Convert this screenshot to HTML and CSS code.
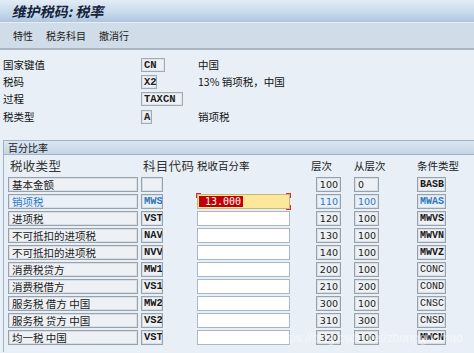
FILE: index.html
```html
<!DOCTYPE html>
<html lang="zh">
<head>
<meta charset="utf-8">
<link rel="stylesheet" href="styles.css">
</head>
<body>
<div class="titlebar"><span class="title">维护税码: 税率</span></div>
<div class="toolbar">
  <span>特性</span><span>税务科目</span><span>撤消行</span>
</div>
<div class="form">
  <div class="frow"><span class="flabel">国家键值</span><span class="fslot"><span class="fbox w24">CN</span></span><span class="ftext">中国</span></div>
  <div class="frow"><span class="flabel">税码</span><span class="fslot"><span class="fbox w16">X2</span></span><span class="ftext">13% 销项税，中国</span></div>
  <div class="frow"><span class="flabel">过程</span><span class="fslot"><span class="fbox w42">TAXCN</span></span><span class="ftext"></span></div>
  <div class="frow"><span class="flabel">税类型</span><span class="fslot"><span class="fbox w11">A</span></span><span class="ftext">销项税</span></div>
</div>
<div class="section">
  <div class="section-head">百分比率</div>
  <div class="table">
    <div class="th big">税收类型</div>
    <div class="th big">科目代码</div>
    <div class="th">税收百分率</div>
    <div class="th shift">层次</div>
    <div class="th">从层次</div>
    <div class="th">条件类型</div>

    <div class="cell"><span class="box name">基本金额</span></div>
    <div class="cell"><span class="box code"></span></div>
    <div class="cell"></div>
    <div class="cell"><span class="box lvl">100</span></div>
    <div class="cell"><span class="box from">0</span></div>
    <div class="cell"><span class="box cond">BASB</span></div>

    <div class="cell"><span class="box name hl">销项税</span></div>
    <div class="cell"><span class="box code hl">MWS</span></div>
    <div class="cell"><span class="pct active"><span class="sel">13.000</span><i class="c tl"></i><i class="c tr"></i><i class="c br"></i></span></div>
    <div class="cell"><span class="box lvl hl">110</span></div>
    <div class="cell"><span class="box from hl">100</span></div>
    <div class="cell"><span class="box cond hl">MWAS</span></div>

    <div class="cell"><span class="box name">进项税</span></div>
    <div class="cell"><span class="box code">VST</span></div>
    <div class="cell"><span class="pct"></span></div>
    <div class="cell"><span class="box lvl">120</span></div>
    <div class="cell"><span class="box from">100</span></div>
    <div class="cell"><span class="box cond">MWVS</span></div>

    <div class="cell"><span class="box name">不可抵扣的进项税</span></div>
    <div class="cell"><span class="box code">NAV</span></div>
    <div class="cell"><span class="pct"></span></div>
    <div class="cell"><span class="box lvl">130</span></div>
    <div class="cell"><span class="box from">100</span></div>
    <div class="cell"><span class="box cond">MWVN</span></div>

    <div class="cell"><span class="box name">不可抵扣的进项税</span></div>
    <div class="cell"><span class="box code">NVV</span></div>
    <div class="cell"><span class="pct"></span></div>
    <div class="cell"><span class="box lvl">140</span></div>
    <div class="cell"><span class="box from">100</span></div>
    <div class="cell"><span class="box cond">MWVZ</span></div>

    <div class="cell"><span class="box name">消费税贷方</span></div>
    <div class="cell"><span class="box code">MW1</span></div>
    <div class="cell"><span class="pct"></span></div>
    <div class="cell"><span class="box lvl">200</span></div>
    <div class="cell"><span class="box from">100</span></div>
    <div class="cell"><span class="box cond light">CONC</span></div>

    <div class="cell"><span class="box name">消费税借方</span></div>
    <div class="cell"><span class="box code">VS1</span></div>
    <div class="cell"><span class="pct"></span></div>
    <div class="cell"><span class="box lvl">210</span></div>
    <div class="cell"><span class="box from">200</span></div>
    <div class="cell"><span class="box cond light">COND</span></div>

    <div class="cell"><span class="box name">服务税 借方 中国</span></div>
    <div class="cell"><span class="box code">MW2</span></div>
    <div class="cell"><span class="pct"></span></div>
    <div class="cell"><span class="box lvl">300</span></div>
    <div class="cell"><span class="box from">100</span></div>
    <div class="cell"><span class="box cond light">CNSC</span></div>

    <div class="cell"><span class="box name">服务税 贷方 中国</span></div>
    <div class="cell"><span class="box code">VS2</span></div>
    <div class="cell"><span class="pct"></span></div>
    <div class="cell"><span class="box lvl">310</span></div>
    <div class="cell"><span class="box from">300</span></div>
    <div class="cell"><span class="box cond light">CNSD</span></div>

    <div class="cell"><span class="box name">均一税 中国</span></div>
    <div class="cell"><span class="box code">VST</span></div>
    <div class="cell"><span class="pct"></span></div>
    <div class="cell"><span class="box lvl">320</span></div>
    <div class="cell"><span class="box from">100</span></div>
    <div class="cell"><span class="box cond">MWCN</span></div>
  </div>
</div>
<div class="watermark">https://blog.csdn.net/zhongguomao</div>
</body>
</html>
```

FILE: styles.css
```css
html, body {
  margin: 0;
  padding: 0;
}
body {
  width: 474px;
  height: 353px;
  overflow: hidden;
  background: #e8eff6;
  font-family: "Noto Sans CJK SC", "Liberation Sans", sans-serif;
  color: #111;
  position: relative;
}
.titlebar {
  height: 22px;
  background: linear-gradient(#e2ecf6, #c6d8ea 60%, #adc6de);
  border-bottom: 1px solid #e6edf4;
  display: flex;
  align-items: center;
  padding-left: 13px;
}
.title {
  display: inline-block;
  font-size: 14px;
  font-weight: bold;
  color: #15243a;
  line-height: 1;
  transform: skewX(-12deg);
}
.toolbar {
  height: 25px;
  background: #d0dde8;
  border-bottom: 2px solid #aab7c3;
  display: flex;
  align-items: center;
  gap: 13px;
  padding-left: 13px;
  font-size: 10px;
  color: #1a1a1a;
}
.form {
  padding: 6px 0 0 3px;
  display: flex;
  flex-direction: column;
}
.frow {
  height: 17.3px;
  display: flex;
  align-items: center;
}
.flabel {
  width: 138px;
  font-size: 10.5px;
  line-height: 14px;
}
.fslot {
  width: 57px;
  display: flex;
}
.fbox {
  height: 14px;
  box-sizing: border-box;
  border: 1px solid #a2abb4;
  box-shadow: inset 0 0 0 1px #dde3e9;
  background: #edf1f5;
  font-family: "Liberation Mono", monospace;
  font-weight: bold;
  font-size: 10.5px;
  line-height: 12px;
  padding-left: 2px;
  color: #222;
}
.w24 { width: 24px; }
.w16 { width: 16px; }
.w42 { width: 42px; }
.w11 { width: 11px; }
.ftext {
  font-size: 10.5px;
  line-height: 14px;
}
.section {
  margin: 15px 0 0 3px;
  border-top: 1px solid #9fb2c6;
  border-left: 1px solid #9fb2c6;
  height: 211px;
  overflow: hidden;
}
.section-head {
  height: 13px;
  background: linear-gradient(#dbe6f1, #c5d5e5);
  border-bottom: 1px solid #9fb2c6;
  font-size: 10px;
  line-height: 13px;
  padding-left: 4px;
  color: #1a1a1a;
}
.table {
  display: grid;
  grid-template-columns: 133px 56px 119px 38px 63px 1fr;
  grid-template-rows: 18px;
  grid-auto-rows: 15px;
  row-gap: 2px;
  padding: 2px 0 0 4px;
}
.th {
  font-size: 10.5px;
  line-height: 18px;
  height: 18px;
  color: #1a1a1a;
  grid-row: 1;
}
.th.big {
  font-size: 12.5px;
  letter-spacing: 0.3px;
  padding-left: 2px;
  color: #333;
}
.th.shift {
  margin-left: -5px;
}
.cell {
  height: 15px;
  display: flex;
}
.box {
  height: 15px;
  box-sizing: border-box;
  border: 1px solid #98a2ac;
  box-shadow: inset 0 0 0 1px #d9dfe5;
  background: #edf1f5;
  display: block;
  line-height: 13px;
  padding: 0 2px;
  color: #1a1a1a;
  white-space: nowrap;
  overflow: hidden;
}
.name {
  width: 130px;
  font-size: 10.5px;
  padding-left: 3px;
}
.code {
  width: 22px;
  font-family: "Liberation Mono", monospace;
  font-weight: bold;
  font-size: 10.5px;
}
.lvl {
  width: 25px;
  font-family: "DejaVu Sans", sans-serif;
  font-size: 9.5px;
  text-align: right;
  padding-right: 2px;
}
.from {
  width: 25px;
  font-family: "DejaVu Sans", sans-serif;
  font-size: 9.5px;
  padding-left: 3px;
}
.cond {
  width: 29px;
  font-family: "Liberation Mono", monospace;
  font-weight: bold;
  font-size: 10px;
  padding-left: 2px;
}
.cond.light {
  font-weight: normal;
}
.box.hl {
  color: #2f78c2;
  background: #e9f0f8;
}
.pct {
  width: 93px;
  height: 15px;
  box-sizing: border-box;
  border: 1px solid #a9b8c7;
  background: #fff;
  display: block;
  position: relative;
}
.pct.active {
  background: #fde79a;
  border-color: #c9b47a;
  padding: 1px;
}
.sel {
  display: block;
  width: 44px;
  height: 11px;
  background: #c00000;
  color: #fff;
  font-family: "DejaVu Sans Mono", monospace;
  font-size: 10px;
  line-height: 11px;
  padding-left: 6px;
  box-sizing: border-box;
}
.c {
  position: absolute;
  width: 4px;
  height: 4px;
  border: 0 solid #d03030;
}
.c.tl { top: -2px; left: -2px; border-top-width: 1px; border-left-width: 1px; }
.c.tr { top: -2px; right: -2px; border-top-width: 1px; border-right-width: 1px; }
.c.br { bottom: -2px; right: -2px; border-bottom-width: 1px; border-right-width: 1px; }
.watermark {
  position: absolute;
  left: 276px;
  top: 331px;
  font-family: "Liberation Sans", sans-serif;
  font-size: 12px;
  color: rgba(255, 255, 255, 0.5);
  pointer-events: none;
}
```
